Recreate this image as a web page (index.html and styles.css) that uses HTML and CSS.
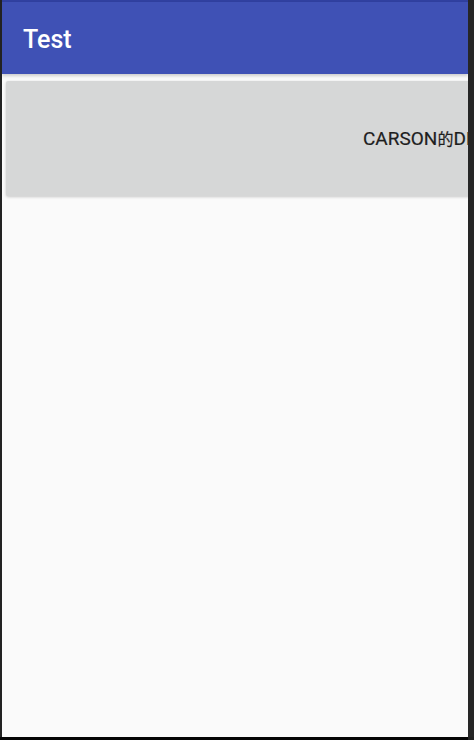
FILE: index.html
```html
<!DOCTYPE html>
<html>
<head>
<meta charset="utf-8">
<link rel="stylesheet" href="styles.css">
</head>
<body>
<div class="frame">
  <div class="screen">
    <div class="status"></div>
    <header class="appbar"><span class="title">Test</span></header>
    <main class="content">
      <div class="card"><span class="card-text">CARSON<span class="cjk">的</span>DEMO</span></div>
    </main>
  </div>
  <div class="side"></div>
</div>
<div class="bottom"></div>
</body>
</html>
```
FILE: styles.css
```css
html, body {
  margin: 0;
  padding: 0;
  width: 474px;
  height: 740px;
  overflow: hidden;
  background: #222222;
  font-family: Roboto, "Noto Sans CJK SC", sans-serif;
}
.frame {
  display: flex;
  height: 737px;
}
.screen {
  margin-left: 2px;
  width: 466px;
  display: flex;
  flex-direction: column;
  background: #fafafa;
  overflow: hidden;
}
.side {
  flex: 1;
  background: #262626;
}
.bottom {
  height: 3px;
  width: 468px;
  background: #050505;
}
.status {
  height: 2px;
  background: #3040a0;
}
.appbar {
  height: 72px;
  background: #3f51b5;
  display: flex;
  align-items: center;
  padding-left: 21px;
  box-shadow: 0 2px 3px rgba(0,0,0,0.18);
  position: relative;
  z-index: 1;
}
.title {
  color: #ffffff;
  font-size: 25px;
  font-weight: 500;
  margin-top: 2px;
}
.content {
  flex: 1;
  padding: 7px 0 0 4px;
}
.card {
  width: 560px;
  height: 115px;
  background: #d6d7d7;
  border-radius: 2px;
  box-shadow: 0 1px 3px rgba(0,0,0,0.2);
  display: flex;
  align-items: center;
  padding-left: 357px;
  box-sizing: border-box;
  white-space: nowrap;
}
.card-text {
  font-size: 19px;
  font-weight: 400;
  color: #1e1e1e;
  margin-top: -2px;
  -webkit-text-stroke: 0.2px #1e1e1e;
}
.cjk {
  font-size: 16px;
}
```
